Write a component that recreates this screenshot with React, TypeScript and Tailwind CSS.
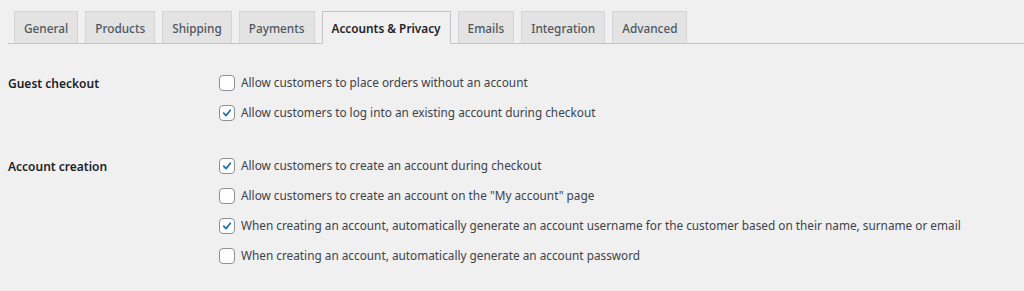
import React from "react";

const tabs = ["General", "Products", "Shipping", "Payments", "Accounts & Privacy", "Emails", "Integration", "Advanced"];

function Check({ checked }: { checked: boolean }) {
  return (
    <span className="flex h-4 w-4 shrink-0 items-center justify-center rounded-[4px] border border-[#8c8f94] bg-white">
      {checked && (
        <svg viewBox="0 0 16 16" className="h-4 w-4">
          <path d="M4.2 8.2 L6.9 11 L11.8 4.8" fill="none" stroke="#2271b1" strokeWidth="2" strokeLinecap="round" strokeLinejoin="round" />
        </svg>
      )}
    </span>
  );
}

function Row({ checked, text }: { checked: boolean; text: string }) {
  return (
    <div className="flex h-[30px] items-center gap-[6px] whitespace-nowrap pl-[1px]">
      <Check checked={checked} />
      <span>{text}</span>
    </div>
  );
}

export default function App() {
  return (
    <div className="h-[291px] w-[1024px] overflow-hidden bg-[#f0f0f1] pl-2 text-[11.8px] text-[#3c434a]" style={{ fontFamily: '"Noto Sans", sans-serif' }}>
      <div className="flex h-[44px] items-end border-b border-[#c3c4c7] pl-[6px]">
        {tabs.map((t) => {
          const active = t === "Accounts & Privacy";
          return (
            <div
              key={t}
              className={
                active
                  ? "-mb-px mr-[7px] flex h-[33px] items-center border border-[#c3c4c7] border-b-[#f0f0f1] bg-[#f0f0f1] px-[9px] pt-[2px] text-[11.8px] font-semibold text-[#1d2327]"
                  : "mr-[7px] flex h-[32px] items-center border border-b-0 border-[#d5d5d7] bg-[#e3e3e4] px-[9px] pt-[2px] text-[11.8px] font-medium text-[#50575e]"
              }
            >
              {t}
            </div>
          );
        })}
      </div>
      <div className="flex pt-[24px]">
        <div className="w-[210px] shrink-0 pt-[7px] text-[12px] font-semibold text-[#1d2327]">Guest checkout</div>
        <div className="flex flex-col">
          <Row checked={false} text="Allow customers to place orders without an account" />
          <Row checked={true} text="Allow customers to log into an existing account during checkout" />
        </div>
      </div>
      <div className="flex pt-[23px]">
        <div className="w-[210px] shrink-0 pt-[7px] text-[12px] font-semibold text-[#1d2327]">Account creation</div>
        <div className="flex flex-col">
          <Row checked={true} text="Allow customers to create an account during checkout" />
          <Row checked={false} text={'Allow customers to create an account on the "My account" page'} />
          <Row checked={true} text="When creating an account, automatically generate an account username for the customer based on their name, surname or email" />
          <Row checked={false} text="When creating an account, automatically generate an account password" />
        </div>
      </div>
    </div>
  );
}
